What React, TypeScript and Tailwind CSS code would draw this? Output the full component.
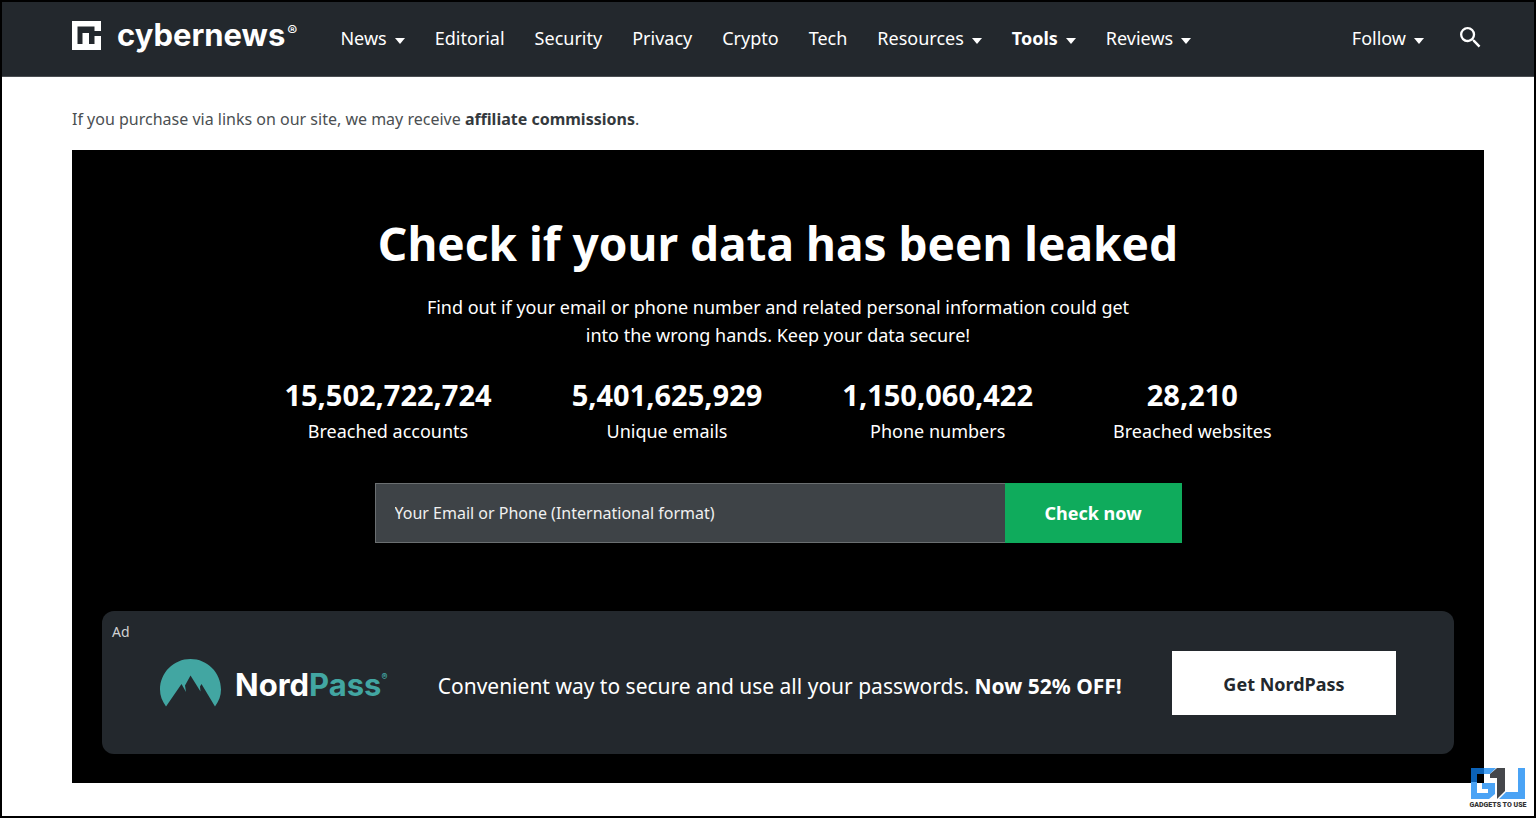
import { clsx } from "clsx";

interface NavItem {
  label: string;
  menu?: boolean;
  active?: boolean;
}

const NAV: NavItem[] = [
  { label: "News", menu: true },
  { label: "Editorial" },
  { label: "Security" },
  { label: "Privacy" },
  { label: "Crypto" },
  { label: "Tech" },
  { label: "Resources", menu: true },
  { label: "Tools", menu: true, active: true },
  { label: "Reviews", menu: true },
];

const STATS = [
  { value: "15,502,722,724", label: "Breached accounts" },
  { value: "5,401,625,929", label: "Unique emails" },
  { value: "1,150,060,422", label: "Phone numbers" },
  { value: "28,210", label: "Breached websites" },
];

export default function App() {
  return (
    <div className="relative flex min-h-screen flex-col border-2 border-black bg-white font-['Noto_Sans','Open_Sans',sans-serif]">
      <Header />
      <main className="pr-[50px] pb-8 pl-[70px]">
        <p className="pt-[30px] pb-[19px] text-[16px] leading-6 text-[#4b4f52]">
          If you purchase via links on our site, we may receive{" "}
          <a href="#affiliate" className="font-bold text-[#34393d]">affiliate commissions</a>.
        </p>
        <section className="bg-black px-[30px] pt-[63px] pb-[29px] text-white">
          <Checker />
          <NordPassAd />
        </section>
      </main>
      <Watermark />
    </div>
  );
}

// ── Header ─────────────────────────────────────────────────────────────────

function Header() {
  return (
    <header className="flex h-[75px] items-center border-b border-[#4a4e52] bg-[#23282d] pr-[53px] pl-[70px] text-[18px] text-white">
      <a href="#home" className="flex items-center gap-4 pb-1">
        <CybernewsMark />
        <span className="flex items-start pb-1 font-['Inter',sans-serif] text-[31px] leading-9 font-bold">
          cybernews
          <span className="pl-0.5 text-[15px] leading-7 font-normal">®</span>
        </span>
      </a>
      <nav className="ml-[43px] flex gap-[30px] pb-0.5">
        {NAV.map((item) => <NavLink key={item.label} item={item} />)}
      </nav>
      <div className="ml-auto flex items-center gap-9 pb-0.5">
        <NavLink item={{ label: "Follow", menu: true }} />
        <button type="button" aria-label="Search" className="pb-0.5">
          <svg viewBox="3 3 18 18" className="size-[21px]" fill="currentColor">
            <path d="M15.5 14h-.79l-.28-.27A6.471 6.471 0 0 0 16 9.5 6.5 6.5 0 1 0 9.5 16c1.61 0 3.09-.59 4.23-1.57l.27.28v.79l5 4.99L20.49 19l-4.99-5zm-6 0C7.01 14 5 11.99 5 9.5S7.01 5 9.5 5 14 7.01 14 9.5 11.99 14 9.5 14z" />
          </svg>
        </button>
      </div>
    </header>
  );
}

function NavLink({ item }: { item: NavItem }) {
  const cls = clsx("flex items-center gap-2", item.active && "font-bold");
  if (!item.menu) {
    return <a href={`#${item.label.toLowerCase()}`} className={cls}>{item.label}</a>;
  }
  return (
    <button type="button" className={cls}>
      {item.label}
      <svg viewBox="0 0 10 6" className="mt-1.5 h-[6px] w-[10px]" fill="currentColor">
        <path d="M0 0h10L5 6z" />
      </svg>
    </button>
  );
}

function CybernewsMark() {
  return (
    <svg viewBox="0 0 29 29" className="mb-1 size-[29px]" fill="#fff">
      <path d="M0 0h29v10h-6.500V5.500h-17V23h5V12H17v11h5.500v-8H29v14H0z" />
    </svg>
  );
}

// ── Leak checker ───────────────────────────────────────────────────────────

function Checker() {
  return (
    <div className="flex flex-col items-center text-center">
      <h1 className="text-[46px] leading-[60px] font-bold">Check if your data has been leaked</h1>
      <p className="mt-5 text-[18px] leading-7">
        Find out if your email or phone number and related personal information could get{" "}
        <br />
        into the wrong hands. Keep your data secure!
      </p>
      <dl className="mt-[26px] flex gap-20">
        {STATS.map((s) => (
          <div key={s.label} className="flex flex-col-reverse">
            <dt className="text-[18px] leading-8">{s.label}</dt>
            <dd className="text-[29px] leading-10 font-bold">{s.value}</dd>
          </div>
        ))}
      </dl>
      <form className="mt-[36px] flex h-[60px] w-full max-w-[807px]" onSubmit={(e) => e.preventDefault()}>
        <input
          type="text"
          aria-label="Your Email or Phone"
          placeholder="Your Email or Phone (International format)"
          className="min-w-0 flex-1 border border-r-0 border-[#6b6f71] bg-[#3e4347] px-[19px] text-[16px] text-white placeholder:text-[#f0f0f0]"
        />
        <button type="submit" className="w-[177px] bg-[#0fab5c] text-[18px] font-bold">Check now</button>
      </form>
    </div>
  );
}

// ── Ad banner ──────────────────────────────────────────────────────────────

function NordPassAd() {
  return (
    <aside className="mt-[68px] rounded-xl bg-[#23282d] px-[10px] pt-[9px] pb-[39px]">
      <div className="text-[14px] leading-6 text-[#d0d2d3]">Ad</div>
      <div className="mt-[7px] flex items-center justify-between pr-[48px] pl-[48px]">
        <a href="#nordpass" className="flex items-center gap-[14px]">
          <svg viewBox="0 0 61 48" className="h-12 w-[61px]" fill="#42a6a2">
            <path d="M6 47.500C2 42 0 36.500 0 30.500 0 13.700 13.700 0 30.500 0S61 13.700 61 30.500c0 6-2 11.500-6 17L41.500 25l-1.500 2.500.5 5L30.500 16.500l-5.500 10 1 6.500-4.500-8z" />
          </svg>
          <span className="flex items-start pt-1 font-['Inter',sans-serif] text-[31px] leading-9 font-bold">
            Nord<span className="text-[#42a6a2]">Pass</span>
            <span className="text-[9px] leading-5 text-[#42a6a2]">®</span>
          </span>
        </a>
        <p className="pt-[6px] text-[21px] leading-8">
          Convenient way to secure and use all your passwords.{" "}
          <strong>Now 52% OFF!</strong>
        </p>
        <a
          href="#get-nordpass"
          className="flex h-16 w-[224px] items-center justify-center bg-white pt-0.5 text-[18px] font-bold text-[#23282d]"
        >
          Get NordPass
        </a>
      </div>
    </aside>
  );
}

// Floating badge pinned over the page corner
function Watermark() {
  return (
    <div className="absolute right-[5px] bottom-[6px] flex w-[62px] flex-col items-center">
      <svg viewBox="0 0 54 32" className="h-8 w-[54px]">
        <path d="M0 0h24l-7 6H6v19h11v-4h-6v-6h13v11l-6 5H0z" fill="#4aa3f5" />
        <path d="M0 0h24l-5 5h-6v1H6v8H0z" fill="#0b62b8" />
        <path d="M13 0h12l-6 6h-6z" fill="#4aa3f5" />
        <path d="M26 0h8v23l-8 8V10h-7V6z" fill="#45474b" />
        <path d="M47 0h7v31H28l7-7h12z" fill="#4aa3f5" />
      </svg>
      <span className="font-['Roboto',sans-serif] text-[7px] leading-[10px] font-black whitespace-nowrap text-[#333]">
        GADGETS TO USE
      </span>
    </div>
  );
}
